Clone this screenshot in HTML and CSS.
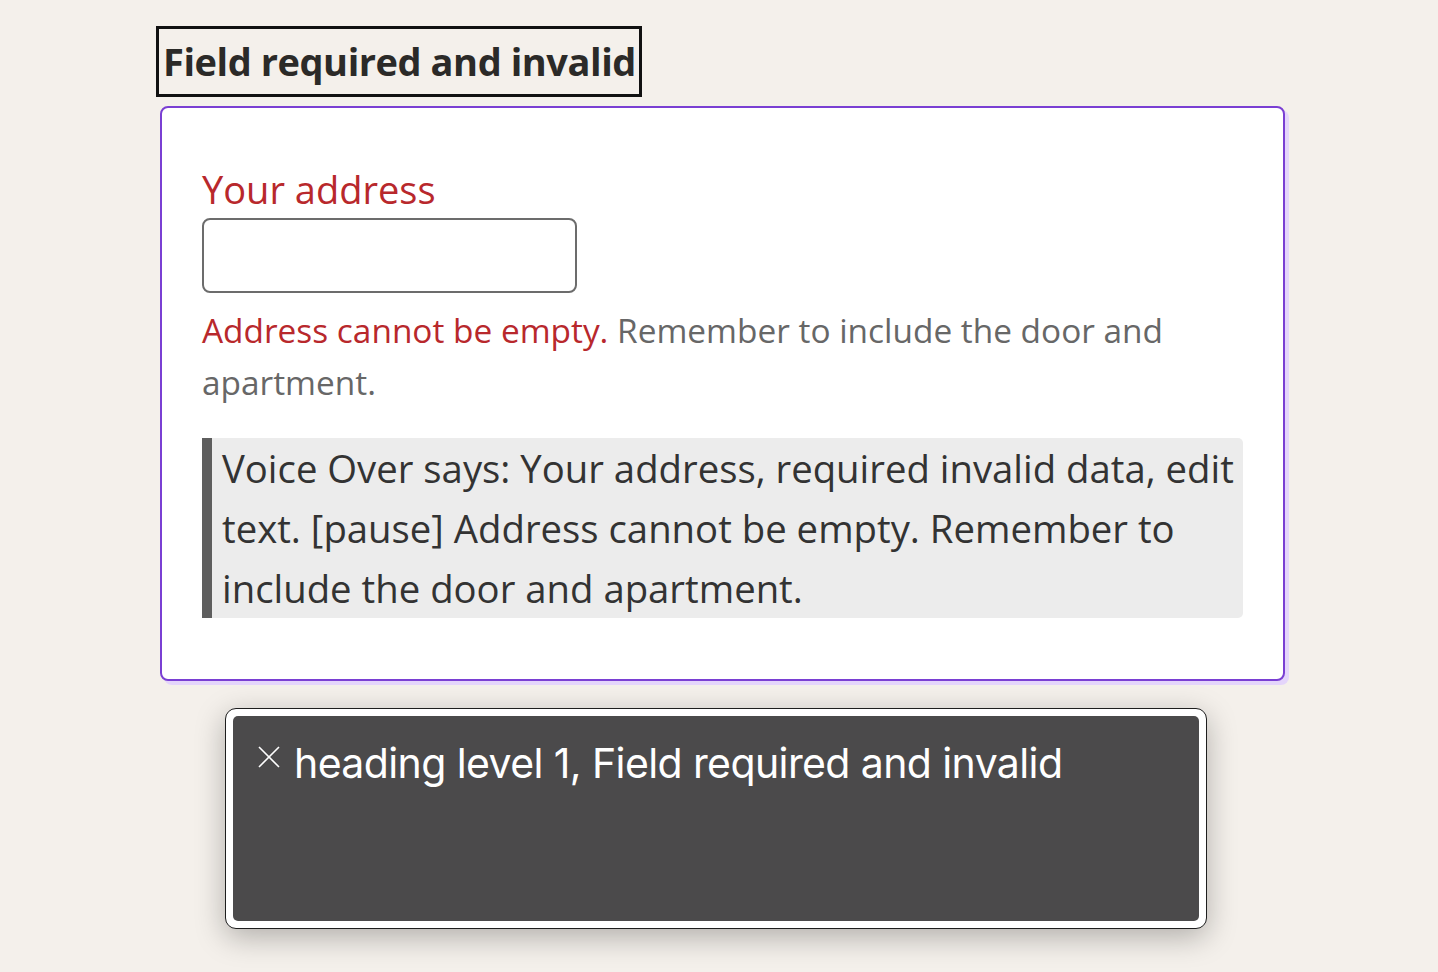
FILE: index.html
```html
<!DOCTYPE html>
<html lang="en">
<head>
<meta charset="utf-8">
<title>Field required and invalid</title>
<link rel="stylesheet" href="styles.css">
</head>
<body>
<div class="page">
  <h1 class="title">Field required and invalid</h1>
  <div class="card">
    <label class="label" for="address">Your address</label>
    <input class="input" id="address" type="text" aria-invalid="true" required>
    <p class="help"><span class="error">Address cannot be empty.</span> Remember to include the door and apartment.</p>
    <blockquote class="voice">Voice Over says: Your address, required invalid data, edit text. [pause] Address cannot be empty. Remember to include the door and apartment.</blockquote>
  </div>
  <div class="toast">
    <div class="toast-inner">
      <svg class="close" width="22" height="22" viewBox="0 0 22 22" aria-hidden="true"><path d="M1 1 L21 21 M21 1 L1 21" stroke="#fff" stroke-width="1.6" fill="none"/></svg>
      <span class="toast-text">heading level 1, Field required and invalid</span>
    </div>
  </div>
</div>
</body>
</html>
```
FILE: styles.css
```css
html, body {
  margin: 0;
  padding: 0;
  background: #f4f0eb;
}
body {
  font-family: "Open Sans", "Noto Sans", sans-serif;
  color: #2b2a28;
}
.page {
  display: flex;
  flex-direction: column;
  align-items: flex-start;
  padding: 26px 0 44px 156px;
}
.title {
  margin: 0;
  border: 3px solid #111;
  padding: 0 3px 0 4px;
  font-size: 38px;
  font-weight: 700;
  line-height: 65px;
  color: #2b2a28;
  letter-spacing: -0.45px;
}
.card {
  box-sizing: border-box;
  width: 1125px;
  margin: 9px 0 0 4px;
  background: #fff;
  border: 2px solid #7a3fd3;
  border-radius: 8px;
  box-shadow: 4px 4px 0 #e4d5fb;
  padding: 54px 40px 61px;
  display: flex;
  flex-direction: column;
  align-items: flex-start;
}
.label {
  font-size: 38px;
  line-height: 54px;
  color: #b8282c;
}
.input {
  box-sizing: border-box;
  width: 375px;
  height: 75px;
  margin: 2px 0 0;
  border: 2px solid #6c6c6c;
  border-radius: 8px;
  background: #fff;
  font: inherit;
}
.help {
  margin: 11px 0 0;
  font-size: 33.4px;
  line-height: 52px;
  color: #676767;
}
.error {
  color: #b8282c;
}
.voice {
  box-sizing: border-box;
  width: 100%;
  margin: 30px 0 0;
  padding: 0 0 0 10px;
  border-left: 10px solid #5e5e5e;
  border-radius: 0 5px 5px 0;
  background: #ececec;
  font-size: 38.3px;
  line-height: 60px;
  color: #333;
}
.toast {
  margin: 27px 0 0 69px;
  width: 982px;
  box-sizing: border-box;
  border: 1px solid #1e1e1e;
  border-radius: 11px;
  padding: 7px;
  background: #fff;
  box-shadow: 0 8px 30px rgba(0, 0, 0, 0.28);
}
.toast-inner {
  height: 205px;
  box-sizing: border-box;
  background: #4b4a4b;
  border-radius: 5px;
  padding: 30px 20px 0 25px;
  display: flex;
  align-items: flex-start;
  gap: 14px;
}
.close {
  flex: none;
}
.toast-text {
  font-family: Inter, "Liberation Sans", sans-serif;
  font-size: 41px;
  line-height: 50px;
  color: #fff;
  margin-top: -8px;
  letter-spacing: -0.6px;
}
```
